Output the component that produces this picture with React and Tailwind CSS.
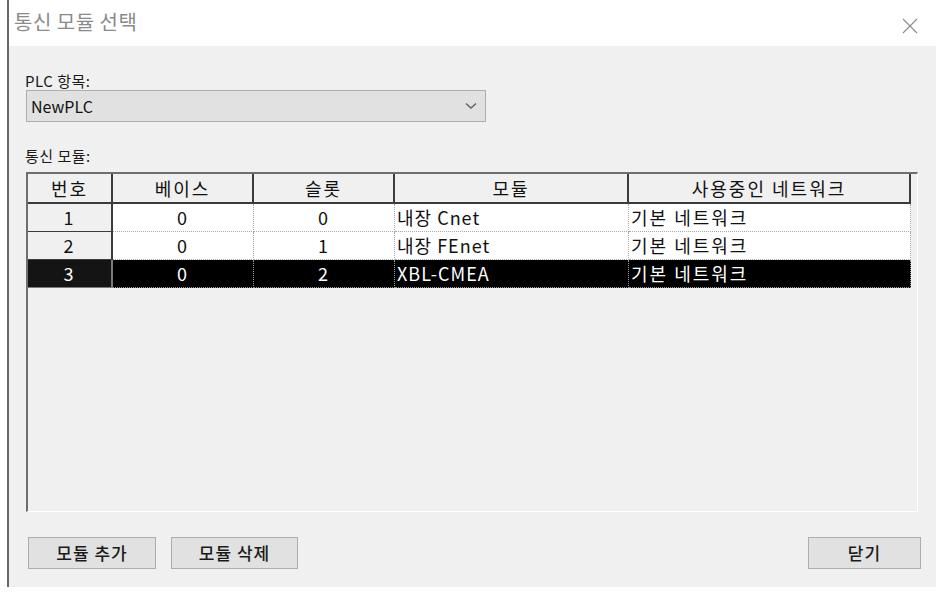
import React from "react";

const cols = ["w-[85px]", "w-[141px]", "w-[141px]", "w-[234px]", "w-[282px]"];

const rows = [
  { no: "1", base: "0", slot: "0", mod: "내장 Cnet", net: "기본 네트워크" },
  { no: "2", base: "0", slot: "1", mod: "내장 FEnet", net: "기본 네트워크" },
  { no: "3", base: "0", slot: "2", mod: "XBL-CMEA", net: "기본 네트워크", sel: true },
];

function HeaderCell({ w, children }) {
  return (
    <div
      className={`${w} h-full flex items-center justify-center bg-[#f0f0f0] border-r-2 border-b-2 border-[#3c3c3c] text-[#111]`}
    >
      {children}
    </div>
  );
}

function Row({ r }) {
  const cell = r.sel
    ? "bg-black text-white border-r border-b border-dotted border-[#9a9a9a]"
    : "bg-white text-[#111] border-r border-b border-dotted border-[#a8a8a8]";
  return (
    <div className="flex h-[28px]">
      <div
        className={`${cols[0]} h-full flex items-center justify-center border-r-2 border-b ${
          r.sel ? "bg-[#141414] text-white border-[#7a7a7a]" : "bg-[#f0f0f0] text-[#111] border-[#3c3c3c]"
        }`}
      >
        {r.no}
      </div>
      <div className={`${cols[1]} h-full flex items-center justify-center ${cell}`}>{r.base}</div>
      <div className={`${cols[2]} h-full flex items-center justify-center ${cell}`}>{r.slot}</div>
      <div className={`${cols[3]} h-full flex items-center pl-[2px] tracking-[1px] ${cell}`}>{r.mod}</div>
      <div className={`${cols[4]} h-full flex items-center pl-[2px] ${cell}`}>{r.net}</div>
    </div>
  );
}

function Button({ w, children }) {
  return (
    <button
      className={`${w} h-[32px] bg-[#e1e1e1] border border-[#adadad] text-[17px] tracking-[1px] font-medium text-[#1a1a1a] flex items-center justify-center`}
    >
      {children}
    </button>
  );
}

export default function App() {
  return (
    <div
      className="w-[942px] h-[593px] bg-white pl-[7px] overflow-hidden"
      style={{ fontFamily: '"Noto Sans CJK KR", "Noto Sans", sans-serif' }}
    >
      <div className="w-[929px] h-[587px] border-l-2 border-[#676767] flex flex-col">
        {/* title bar */}
        <div className="h-[46px] flex items-center justify-between pl-[5px] pr-[24px] bg-white w-[933px]">
          <span className="text-[20px] tracking-[0.5px] text-[#8a8a8a] leading-none mb-[2px]">통신 모듈 선택</span>
          <svg width="16" height="16" viewBox="0 0 16 16" className="mt-[5px]">
            <path d="M1 1 L15 15 M15 1 L1 15" stroke="#8a8a8a" strokeWidth="1.1" fill="none" />
          </svg>
        </div>

        {/* body */}
        <div className="flex-1 bg-[#f0f0f0] pl-[17px] pr-[15px] pt-[25px] flex flex-col">
          <div className="text-[15px] tracking-[0.5px] leading-[19px] text-[#1a1a1a] -ml-[1px]">PLC 항목:</div>
          <div className="w-[460px] h-[32px] bg-[#e1e1e1] border border-[#adadad] flex items-center justify-between pl-[4px] pr-[8px] text-[16px] text-[#111]">
            <span>NewPLC</span>
            <svg width="12" height="8" viewBox="0 0 12 8">
              <path d="M1 1.5 L6 6 L11 1.5" stroke="#606060" strokeWidth="1.4" fill="none" />
            </svg>
          </div>

          <div className="mt-[24px] text-[15px] tracking-[0.5px] leading-[19px] text-[#1a1a1a] -ml-[1px]">통신 모듈:</div>

          <div className="mt-[7px] w-[892px] h-[340px] border-t-2 border-l-2 border-[#6e6e6e] border-b border-r border-b-white border-r-white bg-[#f0f0f0] text-[18px] tracking-[2px] flex flex-col">
            <div className="flex h-[30px]">
              <HeaderCell w={cols[0]}>번호</HeaderCell>
              <HeaderCell w={cols[1]}>베이스</HeaderCell>
              <HeaderCell w={cols[2]}>슬롯</HeaderCell>
              <HeaderCell w={cols[3]}>모듈</HeaderCell>
              <HeaderCell w={cols[4]}>사용중인 네트워크</HeaderCell>
            </div>
            {rows.map((r) => (
              <Row key={r.no} r={r} />
            ))}
          </div>

          <div className="mt-[25px] flex items-center pl-[2px]">
            <div className="flex gap-[15px]">
              <Button w="w-[128px]">모듈 추가</Button>
              <Button w="w-[127px]">모듈 삭제</Button>
            </div>
            <div className="ml-auto">
              <Button w="w-[113px]">닫기</Button>
            </div>
          </div>
        </div>
      </div>
    </div>
  );
}
